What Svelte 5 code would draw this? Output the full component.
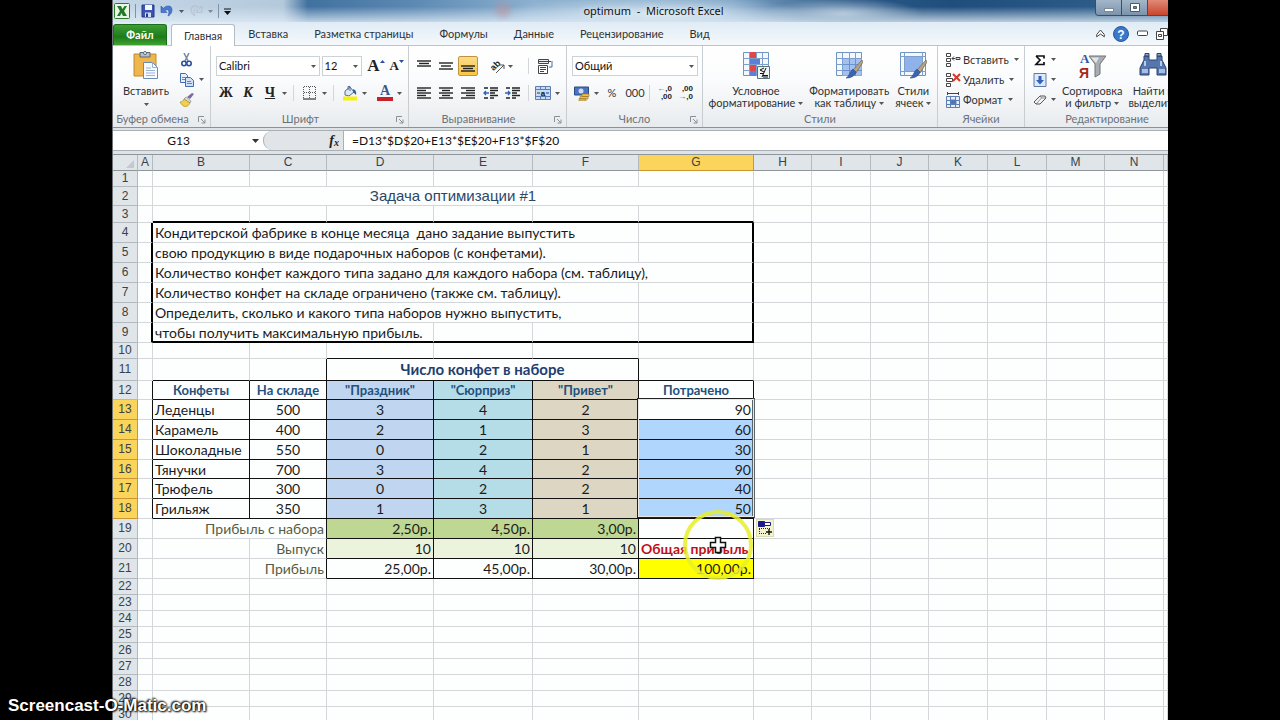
<script>
  const tabs = ['Вставка', 'Разметка страницы', 'Формулы', 'Данные', 'Рецензирование', 'Вид'];
  const columns = [
    ['A', 15], ['B', 97], ['C', 77], ['D', 107], ['E', 99], ['F', 106], ['G', 115], ['H', 58],
    ['I', 59], ['J', 58], ['K', 59], ['L', 59], ['M', 58], ['N', 59], ['', 0]
  ];
  const letters = 'ABCDEFGHIJKLMNO';
  const heights = { 1: 16, 2: 19, 3: 17, 10: 16, 11: 22, 12: 19, 16: 19 };

  const cells = {
    B2: { text: 'Задача оптимизации #1', span: 6, cls: 'title' },
    B4: { text: 'Кондитерской фабрике в конце месяца\u00a0 дано задание выпустить', span: 5 },
    B5: { text: 'свою продукцию в виде подарочных наборов (с конфетами).', span: 5 },
    B6: { text: 'Количество конфет каждого типа задано для каждого набора (см. таблицу),', span: 6 },
    B7: { text: 'Количество конфет на складе ограничено (также см. таблицу).', span: 5 },
    B8: { text: 'Определить, сколько и какого типа наборов нужно выпустить,', span: 5 },
    B9: { text: 'чтобы получить максимальную прибыль.', span: 3 },
    D11: { text: 'Число конфет в наборе', span: 3, cls: 'caption' },
    B12: { text: 'Конфеты', cls: 'head' },
    C12: { text: 'На складе', cls: 'head' },
    D12: { text: '"Праздник"', cls: 'head blue' },
    E12: { text: '"Сюрприз"', cls: 'head aqua' },
    F12: { text: '"Привет"', cls: 'head tan' },
    G12: { text: 'Потрачено', cls: 'head' },
    B19: { text: 'Прибыль с набора', span: 2, cls: 'num olive' },
    D19: { text: '2,50р.', cls: 'num green' },
    E19: { text: '4,50р.', cls: 'num green' },
    F19: { text: '3,00р.', cls: 'num green' },
    C20: { text: 'Выпуск', cls: 'num olive' },
    D20: { text: '10', cls: 'num mint' },
    E20: { text: '10', cls: 'num mint' },
    F20: { text: '10', cls: 'num mint' },
    G20: { text: 'Общая прибыль', cls: 'total' },
    C21: { text: 'Прибыль', cls: 'num olive' },
    D21: { text: '25,00р.', cls: 'num' },
    E21: { text: '45,00р.', cls: 'num' },
    F21: { text: '30,00р.', cls: 'num' },
    G21: { text: '100,00р.', cls: 'num yellow' }
  };
  const sweets = [
    ['Леденцы', 500, 3, 4, 2, 90],
    ['Карамель', 400, 2, 1, 3, 60],
    ['Шоколадные', 550, 0, 2, 1, 30],
    ['Тянучки', 700, 3, 4, 2, 90],
    ['Трюфель', 300, 0, 2, 2, 40],
    ['Грильяж', 350, 1, 3, 1, 50]
  ];
  const looks = ['', 'mid', 'mid blue', 'mid aqua', 'mid tan', 'num picked'];
  sweets.forEach((row, i) =>
    row.forEach((value, j) => {
      cells['BCDEFG'[j] + (13 + i)] = { text: value, cls: i === 0 && j === 5 ? 'num' : looks[j] };
    })
  );

  function edges(col, row) {
    const out = [];
    const wide = 'BCDEFG'.includes(col);
    if (
      (row >= 12 && row <= 18 && (wide || col === 'A')) ||
      (row === 11 && (col === 'C' || col === 'F')) ||
      (row >= 19 && row <= 21 && 'CDEFG'.includes(col))
    ) out.push('ink-right');
    if (
      (row === 10 && 'DEF'.includes(col)) ||
      (row >= 11 && row <= 18 && wide) ||
      (row >= 19 && row <= 21 && 'DEFG'.includes(col))
    ) out.push('ink-bottom');
    if ((row === 3 || row === 9) && wide) out.push('thick-bottom');
    if (row >= 4 && row <= 9 && (col === 'A' || col === 'G')) out.push('thick-right');
    return out.join(' ');
  }

  const rows = Array.from({ length: 30 }, (_, i) => {
    const n = i + 1;
    const list = [];
    for (let c = 0; c < letters.length; ) {
      const cell = cells[letters[c] + n] ?? {};
      const span = cell.span ?? 1;
      list.push({
        id: letters[c] + n,
        text: cell.text ?? '',
        span,
        cls: `${cell.cls ?? ''} ${edges(letters[c + span - 1], n)}`
      });
      c += span;
    }
    return { n, height: heights[n] ?? (n > 21 ? 16 : 20), list };
  });
</script>

{#snippet drop()}
  <svg class="drop" width="5" height="3" viewBox="0 0 5 3" aria-hidden="true"><path d="M0 0h5L2.500 3z" fill="#555" /></svg>
{/snippet}

{#snippet launcher()}
  <svg class="launcher" width="8" height="8" viewBox="0 0 8 8" fill="none" stroke="#8b9094" aria-hidden="true">
    <path d="M.5 6V.5H6M3 3l4 4M7 3.500V7H3.500" />
  </svg>
{/snippet}

{#snippet lines(list)}
  <svg width="14" height="14" viewBox="0 0 14 14" stroke="#222" stroke-width="1.400" aria-hidden="true">
    {#each list as [x1, x2, y]}<path d="M{x1} {y}H{x2}" />{/each}
  </svg>
{/snippet}

{#snippet sheetIcon()}
  <path d="M1.500 1.500h25v23h-25z" fill="#f4f8fd" stroke="#6d93c4" />
  <path d="M1 7.500h26M1 13.500h26M1 19.500h26M7.500 1v24M14.500 1v24M20.500 1v24" stroke="#7d9fcc" fill="none" />
{/snippet}

{#snippet paintBrush()}
  <path d="M27 9L18 19l3 3 7-11z" fill="#b8a482" stroke="#6f6552" stroke-width=".7" />
  <path d="M18 18l3 3c-1 4-5 6-10 6 4-2 3-6 7-9z" fill="#3a63b0" stroke="#2b4a85" stroke-width=".6" />
{/snippet}

<div class="stage">
  <main class="window">
    <header class="titlebar">
      <div class="quick">
        <svg width="16" height="16" viewBox="0 0 16 16" aria-hidden="true">
          <rect x=".5" y=".5" width="15" height="15" rx="1" fill="#eaf5e4" stroke="#2d7a2f" />
          <path d="M3 3h4l1.500 3L10.500 3H13L10 8l3 5H9L7.500 10 6 13H3l3-5z" fill="#1e7b28" />
        </svg>
        <i class="tick"></i>
        <button aria-label="Сохранить">
          <svg width="14" height="14" viewBox="0 0 14 14"><path d="M1 1h12v12H1z" fill="#3a55b4" stroke="#24398a" /><path d="M4 1h7v5H4z" fill="#f3f6fc" /><path d="M4 8.500h6V13H4z" fill="#d6def0" /><path d="M5 9.500h2V13H5z" fill="#24398a" /></svg>
        </button>
        <button class="undo" aria-label="Отменить">
          <svg width="14" height="12" viewBox="0 0 14 12"><path d="M1 1v6.500h6L5 5.500C7.500 3.500 10.500 5 8 11 13 9 13.500 1 8.500 1 6.500 1 5 1.800 3.300 3.300z" fill="#4a79cf" stroke="#2b56a8" stroke-width=".6" /></svg>
          {@render drop()}
        </button>
        <button class="redo" aria-label="Вернуть">
          <svg width="14" height="12" viewBox="0 0 14 12"><path d="M13 1v6.500H7l2-2C6.500 3.500 3.500 5 6 11 1 9 .5 1 5.500 1c2 0 3.500.8 5.200 2.300z" fill="#c4d0de" stroke="#93a4b8" stroke-width=".6" /></svg>
          {@render drop()}
        </button>
        <i class="tick"></i>
        <button aria-label="Настройка панели">
          <svg width="7" height="7" viewBox="0 0 7 7"><path d="M0 1h7" stroke="#111" /><path d="M0 3h7L3.500 7z" fill="#111" /></svg>
        </button>
      </div>
      <h1>optimum&nbsp; -&nbsp; Microsoft Excel</h1>
      <div class="controls">
        <button aria-label="Свернуть"><svg width="12" height="10" viewBox="0 0 12 10"><path d="M1.500 5.500h9v3h-9z" fill="#fff" stroke="#5b6b7c" stroke-width=".7" /></svg></button>
        <button aria-label="Развернуть"><svg width="12" height="10" viewBox="0 0 12 10"><path d="M1.500.5h9v8h-9z" fill="#fff" stroke="#4c5a6a" /><path d="M4.500 3.500h3v2h-3z" fill="#76889b" stroke="#4c5a6a" /></svg></button>
        <button class="close" aria-label="Закрыть"></button>
      </div>
    </header>

    <nav class="tabs">
      <button class="file">Файл</button>
      <button class="active">Главная</button>
      {#each tabs as tab}<button>{tab}</button>{/each}
      <div class="help">
        <svg width="9" height="9" viewBox="0 0 9 9" fill="#fff" stroke="#444"><path d="M.7 5.500L4.500 1l3.800 4.500v2.300L4.500 5 .7 7.800z" /></svg>
        <svg width="16" height="16" viewBox="0 0 16 16"><circle cx="8" cy="8" r="7.500" fill="#3b78c9" stroke="#2458a0" /><text x="8" y="12.500" text-anchor="middle" font-size="12" font-weight="bold" fill="#fff" font-family="Liberation Sans, sans-serif">?</text></svg>
        <svg width="11" height="7" viewBox="0 0 11 7"><rect x=".5" y="1" width="10" height="4.500" rx="1" fill="#fff" stroke="#444" /></svg>
        <svg width="12" height="12" viewBox="0 0 12 12" fill="#fff" stroke="#444"><path d="M4.500.5h7v7h-7z" /><path d="M.5 3.500h7v8h-7z" /><path d="M2.500 6.500h3v2h-3z" /></svg>
      </div>
    </nav>

    <section class="ribbon">
      <div class="group clipboard">
        <div class="body">
          <button class="big">
            <svg width="26" height="28" viewBox="0 0 26 28"><path d="M1 3h22v22H1z" fill="#efb64e" stroke="#c08a2e" /><path d="M7 1.500h10V6H7z" fill="#b9c0c8" stroke="#5f676f" /><circle cx="12" cy="2" r="1.500" fill="#fff" stroke="#5f676f" /><path d="M10.500 11.500h9l5 5v11h-14z" fill="#f7faff" stroke="#6b8ab5" /><path d="M19.500 11.500v5h5M13 17h5M13 19.500h9M13 22h9M13 24.500h9" fill="none" stroke="#9ab2d3" /></svg>
            <span>Вставить</span>
            {@render drop()}
          </button>
          <div class="stack">
            <button aria-label="Вырезать"><svg width="16" height="14" viewBox="0 0 16 14" fill="none"><path d="M5 0l4 8M10 0L6 8" stroke="#7888a0" stroke-width="1.500" /><circle cx="5" cy="10.500" r="2.200" stroke="#2a4fa0" stroke-width="1.600" /><circle cx="10" cy="10.500" r="2.200" stroke="#2a4fa0" stroke-width="1.600" /></svg></button>
            <button aria-label="Копировать"><svg width="16" height="14" viewBox="0 0 16 14" stroke="#3f6db0"><path d="M1.500.5h5l2 2v7h-7z" fill="#e6effb" /><path d="M6.500 4.500h5l3 3v6h-8z" fill="#cfe0f6" /><path d="M8 8.500h4M8 10.500h5M3 4.500h3M3 6.500h3" stroke-width=".8" /></svg>{@render drop()}</button>
            <button aria-label="Формат по образцу"><svg width="16" height="14" viewBox="0 0 16 14"><path d="M15 1l-4 5-3-2 5-4z" fill="#7a6a9e" /><path d="M7 4l5 4-1 2-6-4z" fill="#d9dce2" stroke="#777" stroke-width=".6" /><path d="M5 6l6 4c-1 2-3 4-5 4-2-1-4-3-5-5 2 0 3-1 4-3z" fill="#f0cf4e" stroke="#a98a28" stroke-width=".7" /></svg></button>
          </div>
        </div>
        <footer>Буфер обмена{@render launcher()}</footer>
      </div>

      <div class="group font">
        <div class="body rows">
          <div class="line">
            <label class="pick face"><select aria-label="Шрифт"><option>Calibri</option></select>{@render drop()}</label>
            <label class="pick size"><select aria-label="Размер шрифта"><option>12</option></select>{@render drop()}</label>
            <button class="serif grow" aria-label="Увеличить размер">A<svg width="5" height="3" viewBox="0 0 5 3"><path d="M0 3h5L2.500 0z" fill="#2a4fa0" /></svg></button>
            <button class="serif shrink" aria-label="Уменьшить размер">A<svg width="5" height="3" viewBox="0 0 5 3"><path d="M0 0h5L2.500 3z" fill="#2a4fa0" /></svg></button>
          </div>
          <div class="line">
            <button class="serif glyph">Ж</button>
            <button class="serif glyph italic">К</button>
            <button class="serif glyph under">Ч</button>
            {@render drop()}
            <i class="bar"></i>
            <button class="glyph" aria-label="Границы"><svg width="14" height="14" viewBox="0 0 14 14" fill="none" stroke="#555"><path d="M.5 12V.5h12V12M6.500 1v12M1 6.500h12" stroke-dasharray="1 1" /><path d="M0 13h13" stroke="#111" /></svg></button>
            {@render drop()}
            <i class="bar"></i>
            <button class="glyph" aria-label="Цвет заливки"><svg width="16" height="16" viewBox="0 0 16 16"><path d="M3 6l5-4 4 5-5 4-4-1z" fill="#dfe7f0" stroke="#4f6f96" /><path d="M6 5V1.500h2V6" fill="none" stroke="#4f6f96" /><path d="M11 4c3 1 3.500 3 3 6l-3-3z" fill="#2f60a8" /><path d="M1 11.500h14v4H1z" fill="#f6f10a" /></svg></button>
            {@render drop()}
            <button class="serif glyph tint" aria-label="Цвет текста">A</button>
            {@render drop()}
          </div>
        </div>
        <footer>Шрифт{@render launcher()}</footer>
      </div>

      <div class="group align">
        <div class="body rows">
          <div class="line">
            <button class="glyph" aria-label="По верхнему краю">{@render lines([[0, 14, 2], [2, 12, 4.5], [0, 14, 7]])}</button>
            <button class="glyph" aria-label="По середине">{@render lines([[0, 14, 4], [2, 12, 7], [0, 14, 10]])}</button>
            <button class="glyph on" aria-label="По нижнему краю">{@render lines([[0, 14, 7], [2, 12, 9.5], [0, 14, 12]])}</button>
            <button class="glyph turn" aria-label="Ориентация"><svg width="16" height="16" viewBox="0 0 16 16"><text x="1" y="11" transform="rotate(-45 5 9)" font-size="9" font-weight="bold" fill="#222" font-family="Liberation Sans, sans-serif">ab</text><path d="M6 15l8-8M14 11V7h-4" fill="none" stroke="#555" /></svg>{@render drop()}</button>
            <i class="bar"></i>
            <button class="glyph" aria-label="Перенос текста"><svg width="16" height="16" viewBox="0 0 16 16" fill="none" stroke="#444"><path d="M1.500 1.500h10v4h-10z" fill="#e9edf2" /><path d="M1 3.500h13M1.500 7.500h9v8h-9zM3 9.500h6M3 11.500h6M3 13.500h4" /><path d="M15 3v6h-3" stroke="#3f6db0" /></svg></button>
          </div>
          <div class="line">
            <button class="glyph" aria-label="По левому краю">{@render lines([[0, 14, 2], [0, 9, 4.5], [0, 14, 7], [0, 9, 9.5], [0, 14, 12]])}</button>
            <button class="glyph" aria-label="По центру">{@render lines([[0, 14, 2], [3, 11, 4.5], [0, 14, 7], [3, 11, 9.5], [0, 14, 12]])}</button>
            <button class="glyph" aria-label="По правому краю">{@render lines([[0, 14, 2], [5, 14, 4.5], [0, 14, 7], [5, 14, 9.5], [0, 14, 12]])}</button>
            <button class="glyph" aria-label="Уменьшить отступ"><svg width="15" height="14" viewBox="0 0 15 14" fill="none" stroke="#222" stroke-width="1.300"><path d="M1 2h4M7 2h8M7 4.500h8M7 7h5M7 9.500h8M1 12h4M7 12h4" /><path d="M6 7H1M3 5L1 7l2 2" stroke="#2f60b8" /></svg></button>
            <button class="glyph" aria-label="Увеличить отступ"><svg width="15" height="14" viewBox="0 0 15 14" fill="none" stroke="#222" stroke-width="1.300"><path d="M1 2h4M7 2h8M7 4.500h8M7 7h5M7 9.500h8M1 12h4M7 12h4" /><path d="M0 7h5M3 5l2 2-2 2" stroke="#2f60b8" /></svg></button>
            <i class="bar"></i>
            <button class="glyph wide" aria-label="Объединить"><svg width="16" height="14" viewBox="0 0 16 14"><path d="M.5.500h15v13H.5z" fill="#c9daf2" stroke="#5c7eb0" /><path d="M.5 3.500h15M.5 10.500h15M5.500.5v3M10.500.5v3M5.500 10.500v3M10.500 10.500v3" stroke="#5c7eb0" /><path d="M2 7h3M14 7h-3" stroke="#1e3f80" /><text x="8" y="9.500" text-anchor="middle" font-size="8" font-weight="bold" fill="#111" font-family="Liberation Sans, sans-serif">a</text></svg>{@render drop()}</button>
          </div>
        </div>
        <footer>Выравнивание{@render launcher()}</footer>
      </div>

      <div class="group number">
        <div class="body rows">
          <div class="line">
            <label class="pick format"><select aria-label="Числовой формат"><option>Общий</option></select>{@render drop()}</label>
          </div>
          <div class="line">
            <button class="glyph wide" aria-label="Денежный формат"><svg width="16" height="15" viewBox="0 0 16 15"><path d="M.5 1h14v8H.5z" fill="#4a74c0" stroke="#2b4a85" /><circle cx="7" cy="5" r="2.500" fill="#cddcf5" /><path d="M8 8h7v2.500H8zM6 10.500h8V13H6zM5 12.500h7V15H5z" fill="#eac25a" stroke="#9c7724" stroke-width=".6" /></svg>{@render drop()}</button>
            <button class="glyph sans">%</button>
            <button class="glyph sans">000</button>
            <i class="bar"></i>
            <button class="digits" aria-label="Увеличить разрядность"><span><b>←</b>,0</span><span>,00</span></button>
            <button class="digits" aria-label="Уменьшить разрядность"><span>,00</span><span><b>→</b>,0</span></button>
          </div>
        </div>
        <footer>Число{@render launcher()}</footer>
      </div>

      <div class="group styles">
        <div class="body">
          <button class="big">
            <svg width="28" height="28" viewBox="0 0 28 28">{@render sheetIcon()}<path d="M8 1h6v6H8zM8 14h6v6H8z" fill="#e04848" /><path d="M8 8h10v5H8z" fill="#5a80d8" /><path d="M8 20h6v5H8z" fill="#5a80d8" /><path d="M15.500 15.500h12v12h-12z" fill="#eef3f4" stroke="#5b6f78" /><path d="M22 17l-4 2 4 2M18 22.500h4M21 24.500h5M21 26h5M20 26l4-9" fill="none" stroke="#111" /></svg>
            <span>Условное<br />форматирование&nbsp;{@render drop()}</span>
          </button>
          <button class="big">
            <svg width="28" height="28" viewBox="0 0 28 28">{@render sheetIcon()}<path d="M8 8h19v17H8z" fill="#8fb2ea" opacity=".8" /><path d="M8 13.500h19M8 19.500h19M14.500 8v17M20.500 8v17" stroke="#6a92d2" />{@render paintBrush()}</svg>
            <span>Форматировать<br />как таблицу&nbsp;{@render drop()}</span>
          </button>
          <button class="big">
            <svg width="28" height="28" viewBox="0 0 28 28"><path d="M1.500 1.500h25v23h-25z" fill="#f4f8fd" stroke="#6d93c4" /><path d="M1 5.500h26M1 20.500h26M5.500 1v24M23.500 1v24" stroke="#7d9fcc" /><path d="M6 6h17v14H6z" fill="#8fb2ea" />{@render paintBrush()}</svg>
            <span>Стили<br />ячеек&nbsp;{@render drop()}</span>
          </button>
        </div>
        <footer>Стили</footer>
      </div>

      <div class="group cells">
        <div class="body stack">
          <button><svg width="16" height="14" viewBox="0 0 16 14" fill="#fff" stroke="#444"><path d="M1.500.5h4v3h-4zM1.500 5.500h4v3h-4zM1.500 10.500h4v3h-4z" /><path d="M7 5.500h3M9 3.500L7 5.500l2 2" fill="none" /><path d="M11 4.500h4v2h-4z" fill="#cfe0f6" /></svg>Вставить{@render drop()}</button>
          <button><svg width="16" height="14" viewBox="0 0 16 14" fill="#fff" stroke="#444"><path d="M1.500.5h4v3h-4zM1.500 5.500h6v3h-6zM1.500 10.500h4v3h-4z" /><path d="M8 1l7 7M15 1L8 8" stroke="#d23a2a" stroke-width="2" /></svg>Удалить{@render drop()}</button>
          <button><svg width="16" height="16" viewBox="0 0 16 16" fill="#e6effb" stroke="#5c7eb0"><path d="M1.500 4.500h13v11h-13z" /><path d="M1 8.500h14M1 12.500h14M5.500 4v12M10.500 4v12" /><path d="M6 8h5v4H6z" fill="#4a74c0" /><path d="M2.500 0v3M13.500 0v3M3 1.500h10" stroke="#444" /></svg>Формат{@render drop()}</button>
        </div>
        <footer>Ячейки</footer>
      </div>

      <div class="group editing">
        <div class="body">
          <div class="stack">
            <button aria-label="Сумма"><svg width="14" height="14" viewBox="0 0 14 14"><path d="M3 3h8v2.500M3 3l4 4-4 4.500h8V9" fill="none" stroke="#111" stroke-width="1.700" /></svg>{@render drop()}</button>
            <button aria-label="Заполнить"><svg width="14" height="14" viewBox="0 0 14 14"><path d="M1 .5h12v13H1z" fill="#dfe9f8" stroke="#5a7aae" /><path d="M5.500 3h3v4H11l-4 4.500L3 7h2.500z" fill="#2f62c0" /></svg>{@render drop()}</button>
            <button aria-label="Очистить"><svg width="14" height="14" viewBox="0 0 14 14"><path d="M1 9l6-6 5 0 1 2-6 6H3z" fill="#f3f4f7" stroke="#555" /><path d="M7 3l1.500 2L13 5M8.500 5L3 11" fill="none" stroke="#777" stroke-width=".8" /></svg>{@render drop()}</button>
          </div>
          <button class="big">
            <svg width="28" height="28" viewBox="0 0 28 28"><text x="2" y="12" font-size="13" font-weight="bold" fill="#2b56a8" font-family="Liberation Serif, serif">А</text><text x="1" y="27" font-size="14" font-weight="bold" fill="#a8281e" font-family="Liberation Sans, sans-serif">Я</text><path d="M11 5h17l-6 8v10l-5 3V13z" fill="#a9aeb2" stroke="#6f757a" /><path d="M13 6.500h8L18 12z" fill="#e3e6e8" /></svg>
            <span>Сортировка<br />и фильтр&nbsp;{@render drop()}</span>
          </button>
          <button class="big">
            <svg width="28" height="28" viewBox="0 0 28 28" stroke="#2b4470"><path d="M5 5h5v4h8V5h5v4l4 8v7h-9v-7h-8v7H1v-7l4-8z" fill="#5577ad" /><path d="M6 2.500h4V5H6zM18 2.500h4V5h-4z" fill="#8da6cd" /><path d="M3 18h6v4H3zM20 18h6v4h-6z" fill="#a9bfe2" stroke="none" /><path d="M6 10v5M22 10v5" stroke="#b9cbe8" stroke-width="2" /></svg>
            <span>Найти и<br />выделить</span>
          </button>
        </div>
        <footer>Редактирование</footer>
      </div>
    </section>

    <div class="formula">
      <label class="name"><input aria-label="Имя" value="G13" /><svg width="7" height="4" viewBox="0 0 7 4"><path d="M0 0h7L3.500 4z" fill="#333" /></svg></label>
      <button class="fx" aria-label="Вставить функцию"><i>f</i><small>x</small></button>
      <input class="expr" aria-label="Формула" value="=D13*$D$20+E13*$E$20+F13*$F$20" />
    </div>

    <div class="grid">
      <table>
        <colgroup>
          <col style="width:25px" />
          {#each columns as [, width]}<col style:width={width ? width + 'px' : 'auto'} />{/each}
        </colgroup>
        <thead>
          <tr>
            <th class="corner"><svg width="8" height="8" viewBox="0 0 8 8"><path d="M8 0v8H0z" fill="#c3c9ce" /></svg></th>
            {#each columns as [name]}<th class:lit={name === 'G'} scope="col">{name}</th>{/each}
          </tr>
        </thead>
        <tbody>
          {#each rows as row (row.n)}
            <tr style:height="{row.height}px">
              <th class:lit={row.n >= 13 && row.n <= 18} scope="row">{row.n}</th>
              {#each row.list as cell (cell.id)}
                <td class={cell.cls} colspan={cell.span}>{cell.text}{#if cell.id === 'G13'}<div class="marquee"></div>{/if}{#if cell.id === 'H19'}<button class="smart" aria-label="Параметры автозаполнения"><svg width="14" height="14" viewBox="0 0 14 14"><path d="M.5.500h6v5h-6z" fill="#1a1a8c" stroke="#1a1a8c" /><path d="M6.500 1.500h6v3h-6z" fill="#fff" stroke="#1a1a8c" /><path d="M1 7.500h12M1 12.500h7M1.500 8v4" stroke="#1a1a8c" stroke-dasharray="1 1" /><path d="M11 8v6M8 11h6" stroke="#111" stroke-width="1.400" /></svg></button>{/if}</td>
              {/each}
            </tr>
          {/each}
        </tbody>
      </table>
    </div>

    <svg class="pointer" width="74" height="74" viewBox="0 0 74 74" aria-hidden="true">
      <circle cx="37" cy="37" r="33" fill="none" stroke="#e6ee2c" stroke-width="4" opacity=".85" />
      <path d="M34.500 29.500h5v5h5v5h-5v5h-5v-5h-5v-5h5z" fill="#fff" stroke="#111" stroke-width="1.500" />
    </svg>
  </main>
  <p class="mark">Screencast-O-Matic.com</p>
</div>

<style>
  :global(body) { background: #000; overflow: hidden; }
  .stage {
    --ui: Lato, "Noto Sans", sans-serif;
    --cell: Lato, "Noto Sans", sans-serif;
    position: relative; display: flex; height: 100vh; padding: 0 112px; box-sizing: border-box;
    background: #000; font: 11px/12px var(--ui); color: #2f3336;
  }
  .window {
    position: relative; flex: 1; min-width: 0; display: flex; flex-direction: column;
    overflow: hidden; border-left: 1px solid #6d7276; background: #fdfefe;
  }
  button { border: 0; padding: 0; margin: 0; background: none; font: inherit; color: inherit; display: flex; align-items: center; white-space: nowrap; }
  svg { flex: none; display: block; }
  i.tick { width: 1px; height: 14px; background: #7f93a8; }

  .titlebar {
    display: grid; grid-template-columns: 1fr auto 1fr; align-items: center; flex: none; height: 22px;
    background:
      radial-gradient(ellipse 12px 12px at 390px 10px, #c58c9488, transparent),
      radial-gradient(ellipse 150px 20px at 540px 14px, #dbe9f4ee, transparent),
      radial-gradient(ellipse 80px 16px at 730px 14px, #b5cadc, transparent),
      linear-gradient(180deg, transparent 30%, #dfebf5cc),
      linear-gradient(90deg, #c4d7e8 0, #b4c9dc 170px, #41719f 195px, #5c89b3 300px, #8cb0cf 420px, #7ba2c4 620px, #2b5987 740px, #1f4d7c 840px, #34638f);
  }
  .quick { display: flex; align-items: center; gap: 5px; padding-left: 1px; }
  .quick button { gap: 5px; }
  .quick .redo { opacity: .6; }
  h1 { margin: 0; font: 11px/20px "Noto Sans", sans-serif; color: #111; padding-left: 26px; text-shadow: 0 0 6px #fff; }
  .controls { justify-self: end; align-self: start; display: flex; height: 15px; border: 1px solid #35506e; border-width: 0 0 1px 1px; border-radius: 0 0 0 4px; overflow: hidden; }
  .controls button { width: 26px; justify-content: center; background: linear-gradient(#a4b7c9, #7b93ab); border-right: 1px solid #35506e; }
  .controls .close { width: 20px; background: linear-gradient(#e08a76, #c9452c); border: 0; }

  .tabs { display: flex; flex: none; height: 24px; align-items: stretch; background: linear-gradient(#dfebf5, #f5f9fc); border-bottom: 1px solid #bcc4cb; box-sizing: border-box; }
  .tabs > button { padding: 0 13px; font-size: 11px; }
  .tabs .file { width: 54px; justify-content: center; margin: 2px 4px 0 0; border-radius: 3px 3px 0 0; color: #fff; font-weight: bold; background: linear-gradient(#3f9e35, #1d7a1a 60%, #3fa331); border: 1px solid #1b6e1a; border-bottom: 0; }
  .tabs .active { margin: 2px 0 -1px; padding: 0 12px; border: 1px solid #b4bdc5; border-bottom: 0; border-radius: 3px 3px 0 0; background: #fff; }
  .help { display: flex; align-items: center; gap: 8px; margin-left: auto; }

  .ribbon { display: flex; flex: none; height: 81px; border-bottom: 1px solid #8b9298; background: linear-gradient(#fff, #fbfcfd 40%, #e8ebee); }
  .group { display: flex; flex-direction: column; flex: none; box-sizing: border-box; border-right: 1px solid #c8cdd1; }
  .body { display: flex; flex: 1; justify-content: center; padding: 5px 4px 0; gap: 6px; }
  footer { display: flex; height: 16px; align-items: center; justify-content: center; position: relative; color: #6a7278; font-size: 11px; }
  .launcher { position: absolute; right: 4px; top: 5px; }
  .clipboard { width: 98px; }
  .clipboard footer, .font footer, .align footer { padding-right: 18px; }
  .font { width: 198px; }
  .align { width: 158px; }
  .number { width: 136px; }
  .styles { width: 235px; }
  .cells { width: 87px; }
  .editing { width: 164px; border: 0; }
  .big { flex-direction: column; align-items: center; gap: 6px; align-self: flex-start; text-align: center; }
  .big span .drop { display: inline-block; vertical-align: 2px; }
  .clipboard .big { width: 54px; }
  .stack { display: flex; flex-direction: column; justify-content: flex-start; gap: 3px; }
  .stack button { height: 17px; gap: 4px; }
  .body.stack { align-items: flex-start; padding-left: 7px; gap: 3px; }
  .body.stack button { gap: 2px; }
  .body.stack .drop { margin-left: 3px; }
  .editing .body { padding-left: 8px; justify-content: flex-start; }

  .rows { flex-direction: column; justify-content: flex-start; gap: 7px; padding: 10px 4px 0 5px; }
  .line { display: flex; align-items: center; height: 20px; gap: 2px; }
  .pick { display: flex; align-items: center; height: 20px; box-sizing: border-box; border: 1px solid #cdd2d6; background: #fff; padding-right: 3px; }
  .pick select { appearance: none; border: 0; padding: 0 2px; margin: 0; flex: 1; min-width: 0; background: none; font: 11px/14px var(--ui); color: #111; }
  .face { width: 104px; }
  .size { width: 41px; }
  .format { width: 127px; }
  .serif { font-family: "Liberation Serif", serif; font-weight: bold; color: #222; }
  .grow { font-size: 17px; margin-left: 3px; }
  .shrink { font-size: 13px; margin-left: 3px; }
  .grow svg, .shrink svg { align-self: flex-start; }
  .glyph { width: 20px; height: 20px; justify-content: center; box-sizing: border-box; }
  .glyph.serif { font-size: 14px; }
  .glyph.sans { font-size: 11px; }
  .glyph.wide { width: auto; gap: 4px; }
  .glyph.turn { width: 42px; gap: 2px; }
  .glyph.italic { font-style: italic; }
  .glyph.under { text-decoration: underline; }
  .glyph.on { background: linear-gradient(#fbdc8a, #f9c643); border: 1px solid #c2933a; border-radius: 2px; }
  .glyph.tint { height: 16px; width: 16px; margin: 0 2px 0 8px; border-bottom: 4px solid #c8202a; color: #37598c; }
  .bar { width: 1px; height: 16px; margin: 0 4px; background: #d3d7da; }
  .number .line:last-child { gap: 3px; padding-left: 2px; }
  .number .bar { margin: 0 1px; }
  .digits { flex-direction: column; align-items: flex-end; width: 18px; font: bold 8px/8px "Liberation Sans", sans-serif; color: #222; }
  .digits b { color: #2f60b8; }

  .formula { display: flex; flex: none; height: 19px; margin-top: 2px; margin-bottom: 3px; border: 1px solid #a9b0b6; border-width: 1px 0; box-sizing: content-box; background: #fff; }
  .ribbon + .formula { box-shadow: 0 3px 0 #dfe3e6, 0 -2px 0 #dfe3e6; }
  .name { display: flex; align-items: center; width: 150px; }
  .name input { flex: 1; min-width: 0; border: 0; padding: 0 8px 0 0; text-align: center; background: none; font: 12px/16px var(--cell); color: #111; }
  .name svg { margin-right: 4px; }
  .fx { width: 81px; justify-content: flex-end; padding-right: 4px; box-sizing: border-box; border: 1px solid #a9b0b6; border-width: 0 1px; border-radius: 9px 0 0 9px; background: #e1e5e8; color: #222; font: bold 14px/16px "Liberation Serif", serif; }
  .fx small { font-size: 10px; font-style: italic; padding-top: 4px; }
  .expr { flex: 1; min-width: 0; border: 0; padding: 0 8px; font: 12px/16px var(--cell); color: #111; }

  .grid { flex: 1; min-height: 0; overflow: hidden; border-top: 1px solid #8f979d; }
  table { width: 100%; table-layout: fixed; border-collapse: separate; border-spacing: 0; }
  th { padding: 0; box-sizing: border-box; font: 12px/13px "Liberation Sans", sans-serif; color: #3a4248; background: #dfe5e9; border: 1px solid #b3babf; border-width: 0 1px 1px 0; overflow: hidden; }
  thead th { height: 16px; border-bottom-color: #8f979d; }
  th.lit { background: #fbd45c; border-color: #c9962f; }
  .corner svg { margin: 2px 3px 0 auto; }
  td { padding: 0 2px; box-sizing: border-box; white-space: nowrap; font: 14px/15px var(--cell); color: #1b1b1b; border: 1px solid #d3d7da; border-width: 0 1px 1px 0; }
  td.ink-right { border-right-color: #111; }
  td.ink-bottom { border-bottom-color: #111; }
  td.thick-right { border-right: 2px solid #000; }
  td.thick-bottom { border-bottom: 2px solid #000; }
  .title { font: 15px/16px "Liberation Sans", sans-serif; color: #2b4766; text-align: center; }
  .caption { font-weight: bold; font-size: 15px; color: #1f3f6e; text-align: center; }
  .head { font-weight: bold; font-size: 13px; color: #24507c; text-align: center; }
  .mid { text-align: center; }
  .num { text-align: right; }
  .olive { color: #565c43; }
  .blue { background: #c0d5ef; }
  .aqua { background: #b4dde8; }
  .tan { background: #ddd6c2; }
  .green { background: #bed793; }
  .mint { background: #ebf3dd; }
  .yellow { background: #ffff00; }
  .picked { background: #b0d6fd; }
  .total { color: #c00f18; font-weight: bold; }
  td:has(.marquee), td:has(.smart) { position: relative; }
  .marquee { position: absolute; z-index: 1; left: -2px; top: -2px; right: -2px; height: 117px; border: 1px solid #222; border-right: 3px solid #5d6468; border-bottom-width: 2px; outline: 1px solid #e8e8e8; outline-offset: -2px; }
  .smart { position: absolute; z-index: 2; left: 2px; top: 0; width: 18px; height: 18px; justify-content: center; background: #f3f3cf; border: 1px solid #dcdcae; }
  .pointer { position: absolute; z-index: 3; left: 568px; top: 508px; }
  .mark { position: absolute; left: 8px; bottom: 4px; margin: 0; font: bold 17px/20px "Liberation Sans", sans-serif; color: #fff; text-shadow: 0 0 2px #000, 1px 1px 2px #000, -1px -1px 2px #000; }
</style>
